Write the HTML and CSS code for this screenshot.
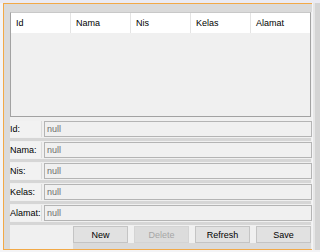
FILE: index.html
```html
<!DOCTYPE html>
<html>
<head>
  <meta name="viewport" content="width=device-width, initial-scale=1">
  <link rel="stylesheet" href="styles.css">
</head>
<body>
  <div class="strip"></div>
  <div class="stage">
    <div class="frame">
      <div class="bar"></div>
      <div class="inner">
        <div class="side"></div>
        <div class="content">
          <div class="table">
            <div class="thead">
              <div class="th">Id</div>
              <div class="th">Nama</div>
              <div class="th">Nis</div>
              <div class="th">Kelas</div>
              <div class="th">Alamat</div>
            </div>
            <div class="tbody"></div>
          </div>

          <div class="form">
            <div class="row"><div class="label">Id:</div><div class="field">null</div></div>
            <div class="sep"></div>
            <div class="row"><div class="label">Nama:</div><div class="field">null</div></div>
            <div class="sep"></div>
            <div class="row"><div class="label">Nis:</div><div class="field">null</div></div>
            <div class="sep"></div>
            <div class="row"><div class="label">Kelas:</div><div class="field">null</div></div>
            <div class="sep"></div>
            <div class="row"><div class="label">Alamat:</div><div class="field">null</div></div>
            <div class="sep"></div>
          </div>

          <div class="buttons">
            <button class="btn">New</button>
            <button class="btn" disabled>Delete</button>
            <button class="btn">Refresh</button>
            <button class="btn">Save</button>
          </div>
          <div class="under"></div>
        </div>
      </div>
    </div>
    <div class="rail"></div>
  </div>
</body>
</html>
```

FILE: styles.css
```css
body {
  margin: 0;
  width: 320px;
  height: 252px;
  overflow: hidden;
  background-color: #f4f4f6;
  font-family: "Liberation Sans", Arial, sans-serif;
  font-size: 9px;
  color: #000;
}
.strip {
  height: 3px;
  background-color: #ebebf3;
}
.stage {
  display: flex;
  height: 247px;
}
.frame {
  width: 308px;
  margin-left: 3px;
  border-left: 1px solid #f2a947;
  border-top: 1px solid #f2a947;
  border-bottom: 1px solid #f2a947;
  background-color: #f0f0f0;
  display: flex;
  flex-direction: column;
}
.bar {
  height: 8px;
  background-color: #dadada;
}
.inner {
  display: flex;
  flex: 1;
}
.side {
  width: 6px;
  background-color: #dadada;
}
.content {
  width: 302px;
  display: flex;
  flex-direction: column;
}
.table {
  width: 299px;
  height: 103px;
  border: 1px solid #a2a2a2;
  border-top-color: #c8c8c8;
  background-color: #f0f0f0;
}
.thead {
  display: flex;
  height: 20px;
  background-color: #fff;
}
.th {
  width: 60px;
  padding-left: 5px;
  line-height: 20px;
  border-right: 1px solid #e4e4e4;
  box-sizing: border-box;
}
.th:last-child {
  border-right: none;
  width: 59px;
}
.form {
  margin-top: 4px;
}
.row {
  display: flex;
  height: 16px;
  gap: 2px;
}
.label {
  width: 32px;
  line-height: 16px;
  background-color: #f2f2f2;
  border-right: 1px solid #dcdcdc;
  box-sizing: border-box;
}
.field {
  width: 269px;
  border: 1px solid #b4b4b4;
  box-sizing: border-box;
  padding-left: 2px;
  line-height: 14px;
  color: #6d6d6d;
}
.sep {
  height: 5px;
  width: 301px;
  background: linear-gradient(#f0f0f0 1px, #d6d6d6 1px, #d6d6d6 4px, #f0f0f0 4px);
}
.buttons {
  display: flex;
  gap: 6px;
  margin-left: 63px;
  height: 17px;
}
button {
  width: 55px;
  height: 17px;
  padding: 0;
  font-family: "Liberation Sans", Arial, sans-serif;
  font-size: 9px;
  color: #000;
  background-color: #e1e1e1;
  border: 1px solid #c4c4c4;
  border-radius: 0;
}
button:disabled {
  color: #a6a6a6;
  background-color: #dcdcdc;
  border-color: #d4d4d4;
}
.under {
  margin-left: 63px;
  width: 238px;
  flex: 1;
  background-color: #dadada;
}
.rail {
  width: 8px;
  margin-left: 1px;
  background: linear-gradient(90deg, #e6e6e6 2px, #d4d4d4 2px);
}
```
